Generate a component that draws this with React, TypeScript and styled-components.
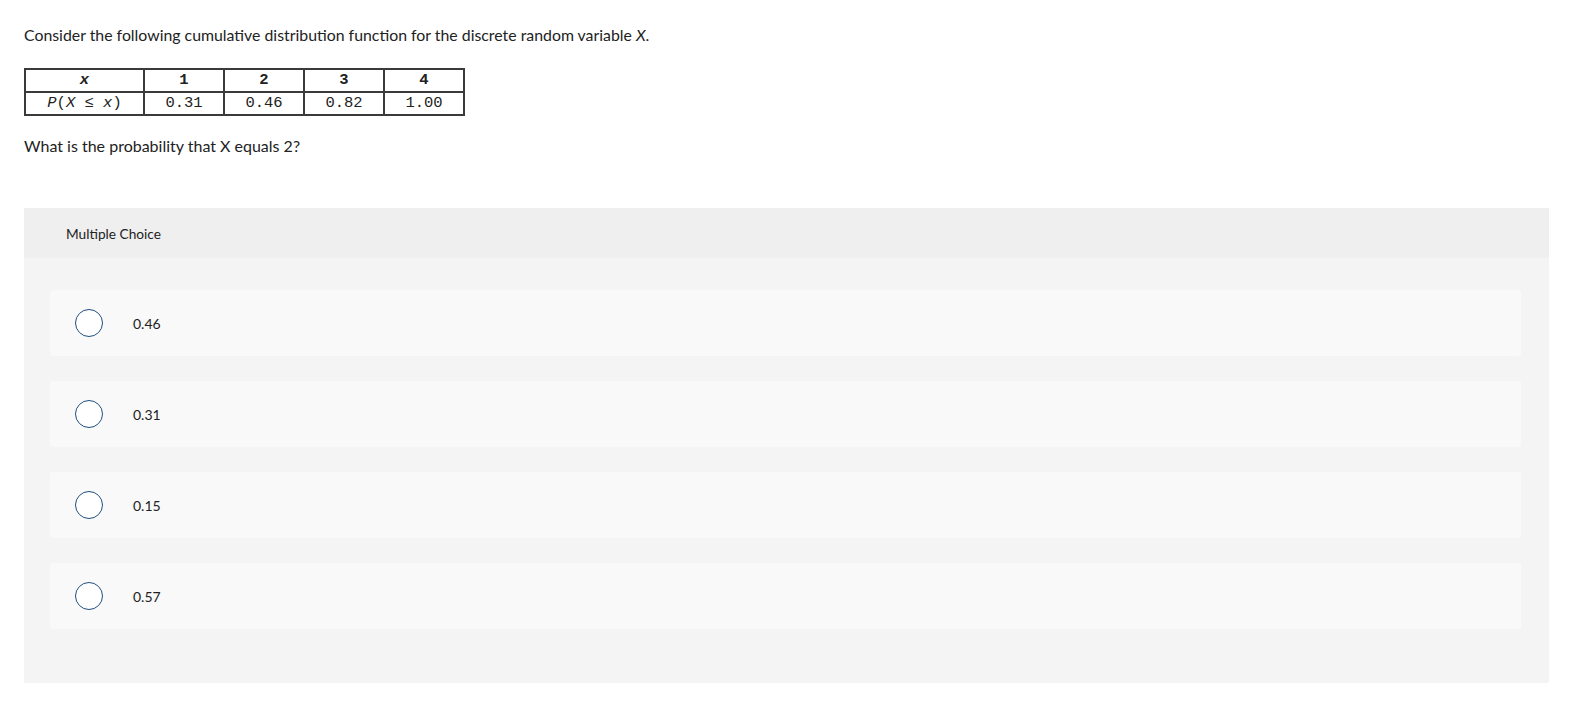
import React from "react";
import styled, { createGlobalStyle } from "styled-components";

const Global = createGlobalStyle`
  html, body { margin: 0; padding: 0; background: #fff; }
  body { font-family: Lato, "Noto Sans", sans-serif; color: #222; }
`;

const Page = styled.div`
  padding: 25px 24px 24px 24px;
  display: flex;
  flex-direction: column;
  align-items: flex-start;
`;

const Prompt = styled.p`
  margin: 0;
  font-size: 15.85px;
  line-height: 20px;
  color: #222;
`;

const Table = styled.table`
  border-collapse: collapse;
  table-layout: fixed;
  margin-top: 23px;
  font-family: "Liberation Mono", "Courier New", monospace;
  font-size: 15.5px;
  color: #222;
`;

const Cell = styled.td<{ $w: number; $bold?: boolean }>`
  border: 2px solid #3a3a3a;
  width: ${(p) => p.$w}px;
  line-height: 21px;
  padding: 0;
  text-align: center;
  white-space: pre;
  font-weight: ${(p) => (p.$bold ? 700 : 400)};
`;

const Question = styled.p`
  margin: 20px 0 0 0;
  font-size: 16px;
  line-height: 20px;
`;

const Panel = styled.section`
  margin-top: 52px;
  background: #f4f4f4;
  border-radius: 2px;
  padding-bottom: 54px;
  width: 1525px;
`;

const PanelHeader = styled.div`
  height: 50px;
  background: #efefef;
  display: flex;
  align-items: center;
  padding-left: 42px;
  font-size: 13.7px;
  color: #222;
`;

const Options = styled.div`
  display: flex;
  flex-direction: column;
  gap: 25px;
  padding: 32px 28px 0 26px;
`;

const Option = styled.label`
  height: 66px;
  background: #f9f9f9;
  border-radius: 3px;
  display: flex;
  align-items: center;
  padding-left: 25px;
`;

const Radio = styled.span`
  width: 28px;
  height: 28px;
  box-sizing: border-box;
  border-radius: 50%;
  border: 1.5px solid #1f4f80;
  background: #fff;
  flex: none;
`;

const OptionText = styled.span`
  margin-left: 30px;
  font-size: 14px;
  color: #222;
`;

export default function App() {
  const xs = ["1", "2", "3", "4"];
  const ps = ["0.31", "0.46", "0.82", "1.00"];
  const opts = ["0.46", "0.31", "0.15", "0.57"];
  return (
    <Page>
      <Global />
      <Prompt>
        Consider the following cumulative distribution function for the discrete random variable <i>X</i>.
      </Prompt>
      <Table>
        <tbody>
          <tr>
            <Cell $w={117} $bold>
              <i>x</i>
            </Cell>
            {xs.map((x) => (
              <Cell key={x} $w={78} $bold>
                {x}
              </Cell>
            ))}
          </tr>
          <tr>
            <Cell $w={117}>
              <i>P</i>(<i>X</i> ≤ <i>x</i>)
            </Cell>
            {ps.map((p) => (
              <Cell key={p} $w={78}>
                {p}
              </Cell>
            ))}
          </tr>
        </tbody>
      </Table>
      <Question>What is the probability that X equals 2?</Question>
      <Panel>
        <PanelHeader>Multiple Choice</PanelHeader>
        <Options>
          {opts.map((o) => (
            <Option key={o}>
              <Radio />
              <OptionText>{o}</OptionText>
            </Option>
          ))}
        </Options>
      </Panel>
    </Page>
  );
}
